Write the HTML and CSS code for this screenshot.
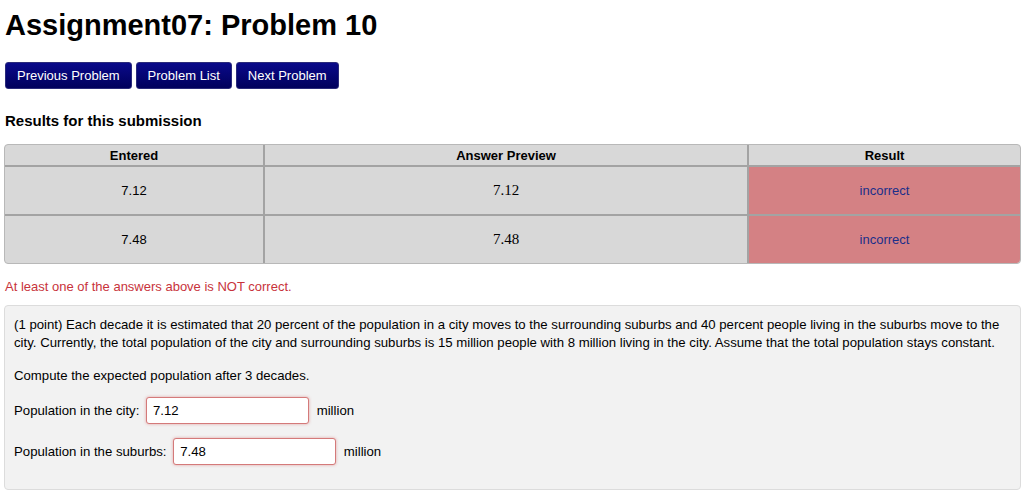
FILE: index.html
```html
<!DOCTYPE html>
<html>
<head>
<meta charset="utf-8">
<link rel="stylesheet" href="styles.css">
</head>
<body>
<h1 class="title">Assignment07: Problem 10</h1>
<div class="nav">
  <a class="btn">Previous Problem</a>
  <a class="btn">Problem List</a>
  <a class="btn">Next Problem</a>
</div>
<h2 class="results-title">Results for this submission</h2>
<table class="results">
  <thead>
    <tr><th class="c1">Entered</th><th class="c2">Answer Preview</th><th class="c3">Result</th></tr>
  </thead>
  <tbody>
    <tr><td>7.12</td><td class="preview">7.12</td><td class="bad">incorrect</td></tr>
    <tr><td>7.48</td><td class="preview">7.48</td><td class="bad">incorrect</td></tr>
  </tbody>
</table>
<p class="warn">At least one of the answers above is NOT correct.</p>
<div class="problem">
  <p class="para">(1 point) Each decade it is estimated that 20 percent of the population in a city moves to the surrounding suburbs and 40 percent people living in the suburbs move to the city. Currently, the total population of the city and surrounding suburbs is 15 million people with 8 million living in the city. Assume that the total population stays constant.</p>
  <p class="para compute">Compute the expected population after 3 decades.</p>
  <p class="row">Population in the city: <input class="ans" type="text" value="7.12"> million</p>
  <p class="row">Population in the suburbs: <input class="ans" type="text" value="7.48"> million</p>
</div>
</body>
</html>
```
FILE: styles.css
```css
body {
  margin: 0;
  padding: 0 3px 0 4px;
  font-family: "Liberation Sans", Arial, sans-serif;
  color: #000;
  background: #fff;
}
.title {
  font-size: 29px;
  font-weight: bold;
  margin: 9px 0 0 1px;
  line-height: 33px;
}
.nav {
  display: flex;
  gap: 4px;
  margin: 20px 0 0 1px;
}
.btn {
  display: block;
  height: 25px;
  line-height: 25px;
  padding: 0 11px;
  font-size: 13px;
  color: #fff;
  background: linear-gradient(#0a0a8a, #00005c);
  border: 1px solid #2a2a7a;
  border-radius: 3px;
}
.results-title {
  font-size: 15px;
  font-weight: bold;
  margin: 23px 0 0 1px;
  line-height: 18px;
}
.results {
  margin-top: 14px;
  width: 100%;
  border-collapse: separate;
  border-spacing: 0;
  background: #d8d8d8;
  border: 1px solid #b8b8b8;
  border-radius: 4px;
  font-size: 13px;
}
.results th {
  height: 20px;
  font-weight: bold;
  font-size: 13px;
  border-bottom: 2px solid #a3a3a3;
  border-right: 2px solid #a3a3a3;
  padding: 0;
}
.results td {
  height: 47px;
  text-align: center;
  border-bottom: 2px solid #a3a3a3;
  border-right: 2px solid #a3a3a3;
  padding: 0;
}
.results tr > :last-child { border-right: none; }
.results tbody tr:last-child td { border-bottom: none; }
.c1 { width: 258px; }
.c2 { width: 482px; }
.results td.preview {
  font-family: "Liberation Serif", "Times New Roman", serif;
  font-size: 15px;
}
.results td.bad {
  background: #d48184;
  color: #1b2f8a;
}
.results tbody tr:last-child td.bad { border-bottom-right-radius: 4px; }
.warn {
  color: #c8333b;
  font-size: 13px;
  margin: 15px 0 0 1px;
  line-height: 16px;
}
.problem {
  margin-top: 10px;
  background: #f2f2f2;
  border: 1px solid #dcdcdc;
  border-radius: 4px;
  padding: 10px 9px 10px 9px;
  font-size: 13.2px;
  line-height: 18px;
}
.para {
  margin: 0 0 15px 0;
}
.para.compute {
  margin-bottom: 12px;
}
.row {
  margin: 0 0 14px 0;
  display: flex;
  align-items: center;
  white-space: pre;
}
.ans {
  width: 149px;
  height: 25px;
  box-sizing: content-box;
  padding: 0 6px;
  margin: 0 4px 0 3px;
  border: 1px solid #d47a7a;
  border-radius: 3px;
  box-shadow: 0 0 3px rgba(212, 80, 80, 0.5);
  font-family: "Liberation Sans", Arial, sans-serif;
  font-size: 13.2px;
  background: #fff;
  color: #000;
}
```
